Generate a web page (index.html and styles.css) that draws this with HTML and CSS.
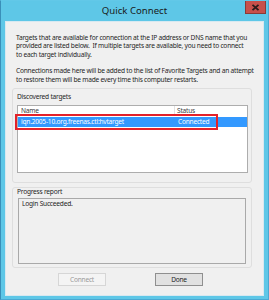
FILE: index.html
```html
<!DOCTYPE html>
<html>
<head>
<meta charset="utf-8">
<link rel="stylesheet" href="styles.css">
</head>
<body>
<div class="window">
  <div class="titlebar">
    <span></span>
    <span class="title">Quick Connect</span>
    <span class="close"><svg width="9" height="7" viewBox="0 0 9 7"><path d="M1.5 0.8 L7.5 6.2 M7.5 0.8 L1.5 6.2" stroke="#2a1a1a" stroke-width="1.8"/></svg></span>
  </div>
  <div class="client">
    <p class="para">Targets that are available for connection at the IP address or DNS name that you<br>provided are listed below.&nbsp; If multiple targets are available, you need to connect<br>to each target individually.</p>
    <p class="para">Connections made here will be added to the list of Favorite Targets and an attempt<br>to restore them will be made every time this computer restarts.</p>
    <div class="group group-targets">
      <div class="group-label">Discovered targets</div>
      <div class="listview">
        <div class="lv-header">
          <div class="col-name">Name</div>
          <div class="col-status">Status</div>
        </div>
        <div class="lv-row selected">
          <div class="col-name">iqn.2005-10.org.freenas.ctl:hvtarget</div>
          <div class="col-status">Connected</div>
        </div>
        <div class="highlight"></div>
      </div>
    </div>
    <div class="group group-progress">
      <div class="group-label">Progress report</div>
      <div class="textbox">Login Succeeded.</div>
    </div>
    <div class="buttons">
      <div class="btn disabled">Connect</div>
      <div class="btn default">Done</div>
    </div>
  </div>
</div>
</body>
</html>
```

FILE: styles.css
```css
* { box-sizing: border-box; }
html, body { margin: 0; padding: 0; }
body {
  font-family: "Noto Sans", "DejaVu Sans", sans-serif;
  font-size: 6.6px;
  letter-spacing: -0.22px;
  color: #1e1e1e;
}
.window {
  width: 269px;
  height: 300px;
  background: #5ec7e7;
  border-left: 1px solid #3a8fb9;
  border-right: 1px solid #4aa9d3;
  border-bottom: 1px solid #4aa9d3;
  border-top: 1px solid #62c8e8;
  padding: 0 4px 3px 4px;
  display: flex;
  flex-direction: column;
}
.titlebar {
  height: 20px;
  display: grid;
  grid-template-columns: 1fr auto 1fr;
  align-items: start;
  margin-right: -2px;
}
.title {
  font-size: 9.6px;
  letter-spacing: 0;
  line-height: 19px;
  color: #1a1a1a;
  padding-right: 2px;
}
.close {
  justify-self: end;
  width: 21px;
  height: 13px;
  background: #c7504a;
  border: 1px solid #8a3a36;
  border-top: none;
  display: flex;
  align-items: center;
  justify-content: center;
}
.client {
  flex: 1;
  background: #f0f0f0;
  border: 1px solid #d7e9f1;
  padding: 12px 0 0 6px;
  display: flex;
  flex-direction: column;
}
.para {
  margin: 0 0 8.4px 4px;
  line-height: 8.35px;
  white-space: nowrap;
}
.group {
  width: 240px;
  border: 1px solid #dedede;
  border-radius: 3px;
  padding-left: 4px;
}
.group-targets {
  margin-top: -5px;
  padding-top: 4px;
  padding-bottom: 9px;
}
.group-progress {
  margin-top: 4px;
  padding-top: 0;
  padding-bottom: 3px;
}
.group-label {
  line-height: 8.4px;
  color: #1e1e1e;
}
.listview {
  position: relative;
  margin-top: 4px;
  width: 231px;
  height: 68px;
  background: #fff;
  border: 1px solid #adadad;
}
.lv-header, .lv-row {
  display: flex;
}
.lv-header {
  height: 9px;
  line-height: 9px;
  color: #3c3c3c;
}
.col-name {
  width: 157px;
  padding-left: 3px;
  white-space: nowrap;
}
.col-status {
  padding-left: 3px;
  white-space: nowrap;
}
.lv-header .col-name {
  border-right: 1px solid #e3e3e3;
}
.lv-header .col-status { padding-left: 2px; }
.lv-row {
  margin-top: 2px;
  height: 10px;
  line-height: 10px;
}
.lv-row.selected {
  background: #3399ff;
  color: #ffffff;
}
.highlight {
  position: absolute;
  left: -3px;
  top: 8px;
  width: 203px;
  height: 16px;
  border: 2px solid #e4222a;
}
.textbox {
  margin-top: 2px;
  margin-left: 1px;
  width: 228px;
  height: 66px;
  border: 1px solid #a9a9a9;
  background: #f0f0f0;
  padding: 1px 3px;
  line-height: 8.4px;
}
.buttons {
  display: flex;
  gap: 49px;
  margin-top: 5px;
  padding-left: 46px;
}
.btn {
  width: 48px;
  height: 13px;
  line-height: 11px;
  text-align: center;
}
.btn.disabled {
  border: 1px solid #d6d6d6;
  background: #f4f4f4;
  color: #9a9a9a;
}
.btn.default {
  border: 1px solid #8f8f8f;
  background: #e1e1e1;
  color: #1e1e1e;
}
```
